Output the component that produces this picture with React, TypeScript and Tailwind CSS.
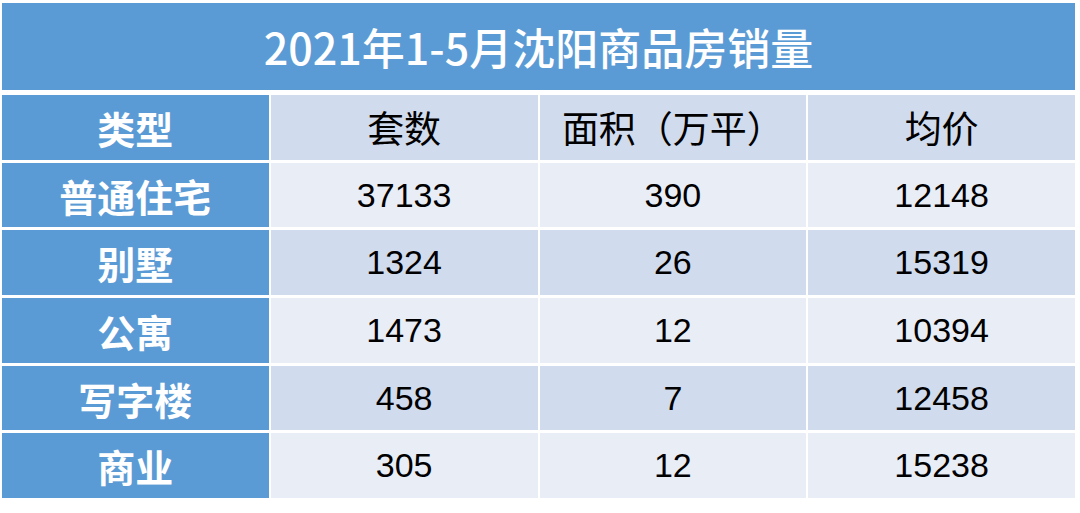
const rows = [
  { type: "普通住宅", units: "37133", area: "390", price: "12148" },
  { type: "别墅", units: "1324", area: "26", price: "15319" },
  { type: "公寓", units: "1473", area: "12", price: "10394" },
  { type: "写字楼", units: "458", area: "7", price: "12458" },
  { type: "商业", units: "305", area: "12", price: "15238" },
];

const cjk = "font-['Noto_Sans_CJK_SC',sans-serif]";
const num = "font-['Liberation_Sans','Noto_Sans_CJK_SC',sans-serif]";

export default function App() {
  return (
    <div className="w-[1080px] h-[513px] bg-white pt-[3px] pl-[2px]">
      <div className="w-[1073px] flex flex-col">
        <div
          className={`h-[87px] bg-[#5b9bd5] flex items-center justify-center text-white text-[43px] font-medium ${cjk}`}
        >
          2021年1-5月沈阳商品房销量
        </div>

        <div className="mt-[5px] grid grid-cols-4 gap-x-[2px] gap-y-[3px] auto-rows-[64.7px]">
          <div
            className={`bg-[#5b9bd5] flex items-center justify-center text-white text-[38px] font-bold ${cjk}`}
          >
            类型
          </div>
          {["套数", "面积（万平）", "均价"].map((h) => (
            <div
              key={h}
              className={`bg-[#d0dbed] flex items-center justify-center text-black text-[37px] ${cjk}`}
            >
              {h}
            </div>
          ))}

          {rows.map((r, i) => {
            const cell = i % 2 === 0 ? "bg-[#e9edf6]" : "bg-[#d0dbed]";
            return [
              <div
                key={r.type}
                className={`bg-[#5b9bd5] flex items-center justify-center text-white text-[38px] font-bold ${cjk}`}
              >
                {r.type}
              </div>,
              <div
                key={r.type + "u"}
                className={`${cell} flex items-center justify-center text-black text-[34px] ${num}`}
              >
                {r.units}
              </div>,
              <div
                key={r.type + "a"}
                className={`${cell} flex items-center justify-center text-black text-[34px] ${num}`}
              >
                {r.area}
              </div>,
              <div
                key={r.type + "p"}
                className={`${cell} flex items-center justify-center text-black text-[34px] ${num}`}
              >
                {r.price}
              </div>,
            ];
          })}
        </div>
      </div>
    </div>
  );
}
